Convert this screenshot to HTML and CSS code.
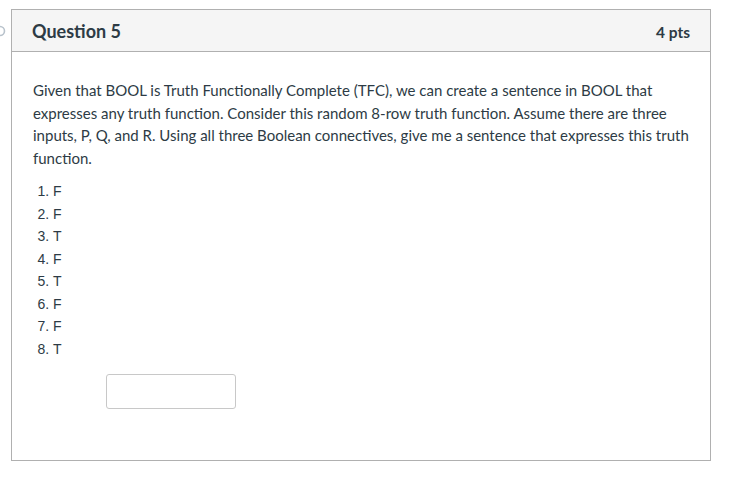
FILE: index.html
```html
<!DOCTYPE html>
<html>
<head>
<meta charset="utf-8">
<link rel="stylesheet" href="styles.css">
</head>
<body>
<div class="edge-icon"><svg width="6" height="12" viewBox="0 0 6 12"><path d="M0 1.5 A4.5 4.5 0 0 1 0 10.5" fill="none" stroke="#b9c3cc" stroke-width="1.6"/></svg></div>
<div class="question">
  <div class="q-header">
    <span class="q-title">Question 5</span>
    <span class="q-pts">4 pts</span>
  </div>
  <div class="q-body">
    <p class="q-text">Given that BOOL is Truth Functionally Complete (TFC), we can create a sentence in BOOL that expresses any truth function. Consider this random 8-row truth function. Assume there are three inputs, P, Q, and R. Using all three Boolean connectives, give me a sentence that expresses this truth function.</p>
    <ol class="q-list">
      <li>F</li>
      <li>F</li>
      <li>T</li>
      <li>F</li>
      <li>T</li>
      <li>F</li>
      <li>F</li>
      <li>T</li>
    </ol>
    <div class="answer-row"><input class="answer" type="text"></div>
  </div>
</div>
</body>
</html>
```

FILE: styles.css
```css
html, body {
  margin: 0;
  padding: 0;
  background: #ffffff;
}
body {
  padding: 9px 0 0 11px;
  font-family: Lato, "Open Sans", sans-serif;
  color: #2d3b45;
  position: relative;
}
.edge-icon {
  position: absolute;
  left: 0;
  top: 25px;
  line-height: 0;
}
.question {
  width: 700px;
  box-sizing: border-box;
  border: 1px solid #b0b0b0;
}
.q-header {
  display: flex;
  justify-content: space-between;
  align-items: center;
  height: 42px;
  box-sizing: border-box;
  padding: 0 20px 0 20px;
  background: #f5f5f5;
  border-bottom: 1px solid #b0b0b0;
}
.q-title {
  font-weight: bold;
  font-size: 18px;
}
.q-pts {
  font-weight: bold;
  font-size: 15.5px;
  margin-top: 2px;
}
.q-body {
  padding: 27px 21px 51px 21px;
  font-size: 15px;
  line-height: 22.5px;
}
.q-text {
  margin: 0 0 11px 0;
}
.q-list {
  margin: 0 0 14px 0;
  padding-left: 20px;
  font-family: "Liberation Sans", Arial, sans-serif;
  font-size: 14px;
}
.answer-row {
  display: flex;
  padding-left: 73px;
}
.answer {
  width: 130px;
  height: 35px;
  box-sizing: border-box;
  border: 1px solid #c8c8c8;
  border-radius: 3px;
  margin: 0;
  padding: 0;
  background: #fff;
}
```
